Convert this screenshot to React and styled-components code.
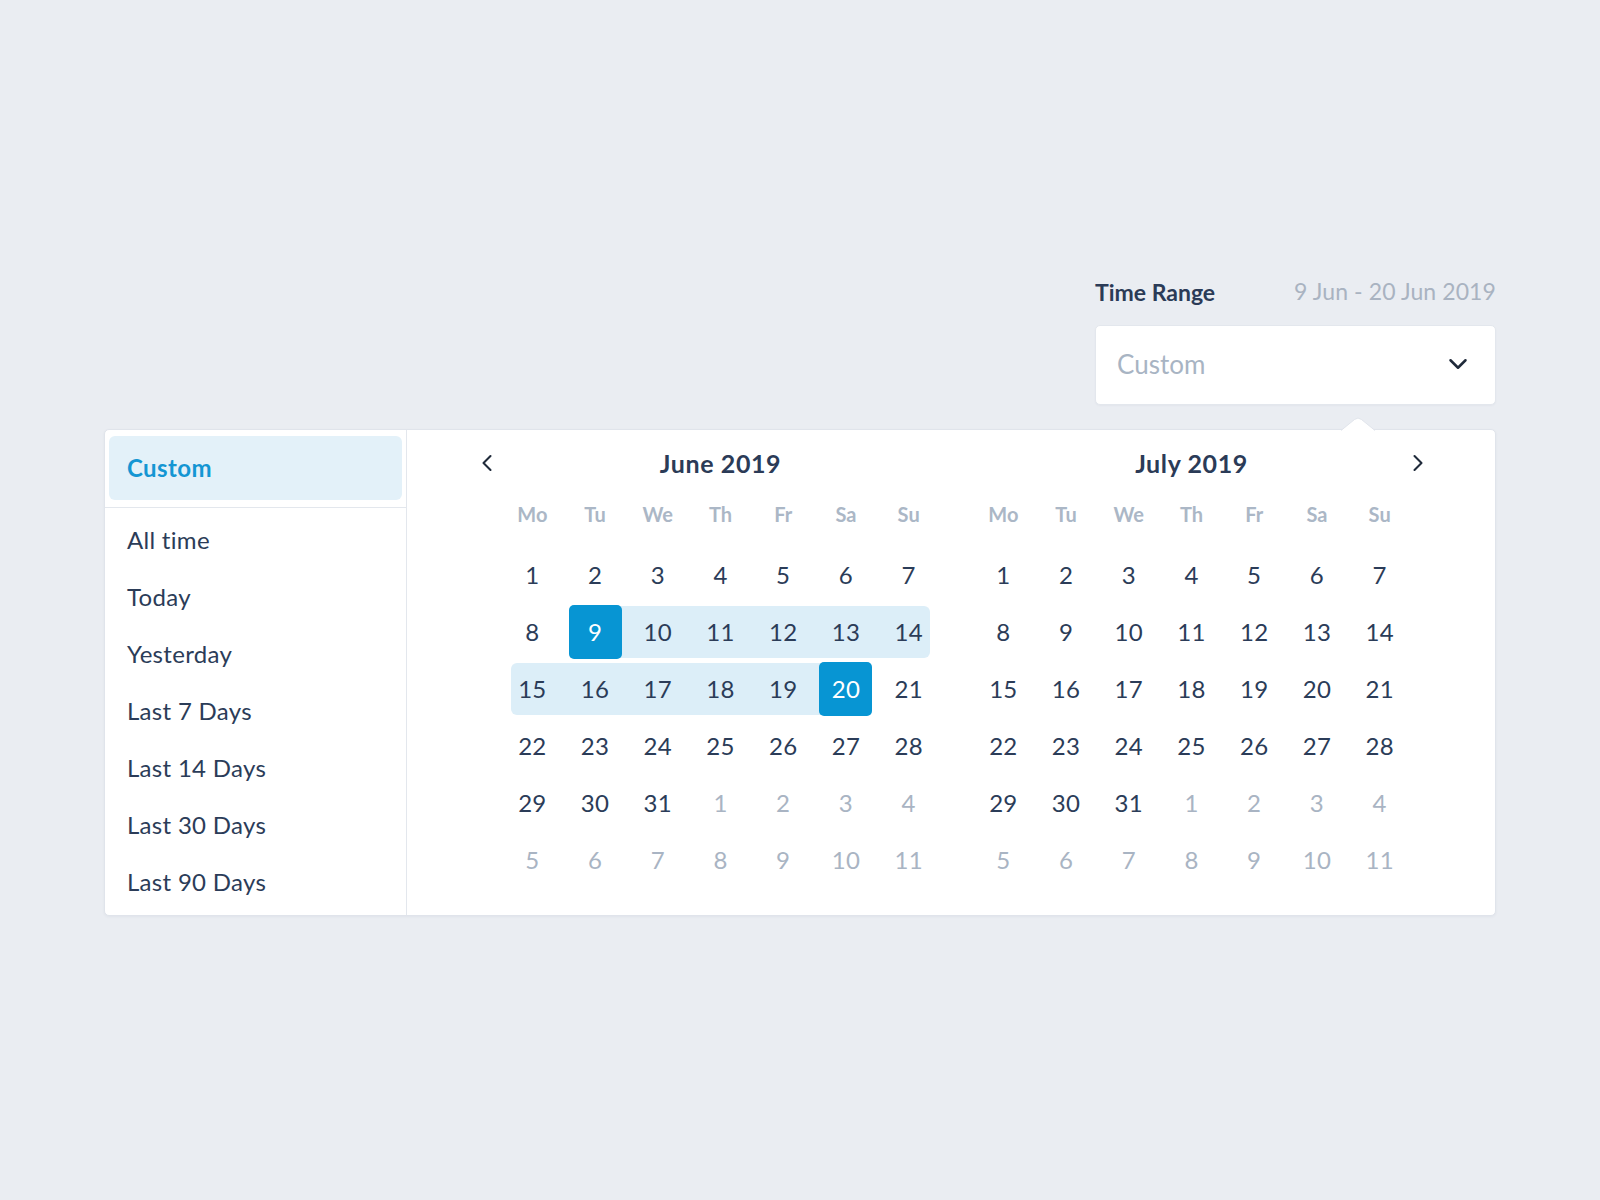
import styled, { createGlobalStyle } from 'styled-components'
import { ChevronLeft, ChevronRight, ChevronDown } from 'lucide-react'

const GlobalStyle = createGlobalStyle`
  body {
    margin: 0;
    background: #eaedf2;
    font-family: Lato, "Open Sans", sans-serif;
    color: #2b3c58;
  }
`

const presets = ['All time', 'Today', 'Yesterday', 'Last 7 Days', 'Last 14 Days', 'Last 30 Days', 'Last 90 Days']
const weekdays = ['Mo', 'Tu', 'We', 'Th', 'Fr', 'Sa', 'Su']

// mock grid: 1..31 then next month 1..11, starting on a Monday
const days = [
  ...Array.from({ length: 31 }, (_, i) => ({ n: i + 1, muted: false })),
  ...Array.from({ length: 11 }, (_, i) => ({ n: i + 1, muted: true })),
]

export default function App() {
  return (
    <>
      <GlobalStyle />
      <Page>
        <Header>
          <LabelRow>
            <Label>Time Range</Label>
            <RangeText>9 Jun - 20 Jun 2019</RangeText>
          </LabelRow>
          <Select>
            <span>Custom</span>
            <ChevronDown size={30} strokeWidth={2} color="#1f2a3a" />
          </Select>
        </Header>

        <Panel>
          <Caret width="34" height="14" viewBox="0 0 34 14">
            <path d="M0 13.5 L13.5 2.5 Q17 -0.5 20.5 2.5 L34 13.5" fill="#fff" stroke="#e0e4eb" strokeWidth="1" />
          </Caret>
          <Sidebar>
            <ActiveItem>Custom</ActiveItem>
            <Divider />
            <PresetList>
              {presets.map(p => <PresetItem key={p}>{p}</PresetItem>)}
            </PresetList>
          </Sidebar>
          <CalendarArea>
            <NavButton $side="left"><ChevronLeft size={28} strokeWidth={1.8} /></NavButton>
            <Month title="June 2019" range={[9, 20]} />
            <Month title="July 2019" />
            <NavButton $side="right"><ChevronRight size={28} strokeWidth={1.8} /></NavButton>
          </CalendarArea>
        </Panel>
      </Page>
    </>
  )
}

function Month({ title, range }) {
  return (
    <MonthPane>
      <MonthTitle>{title}</MonthTitle>
      <WeekRow>
        {weekdays.map(w => <Weekday key={w}>{w}</Weekday>)}
      </WeekRow>
      <DayGrid>
        {days.map((d, i) => {
          const col = i % 7
          let band = 'none'
          let selected = false
          if (range && !d.muted && d.n >= range[0] && d.n <= range[1]) {
            selected = d.n === range[0] || d.n === range[1]
            band = d.n === range[0] ? 'start' : d.n === range[1] ? 'end' : 'mid'
          }
          return (
            <Day
              key={i}
              $band={band}
              $rowStart={col === 0}
              $rowEnd={col === 6}
              $muted={d.muted}
            >
              {selected ? <Picked>{d.n}</Picked> : <span>{d.n}</span>}
            </Day>
          )
        })}
      </DayGrid>
    </MonthPane>
  )
}

const Page = styled.div`
  width: 1392px;
  margin-left: 104px;
  padding-top: 276px;
  padding-bottom: 200px;
`

const Header = styled.div`
  width: 401px;
  margin-left: auto;
`

const LabelRow = styled.div`
  display: flex;
  justify-content: space-between;
  align-items: center;
  height: 30px;
`

const Label = styled.div`
  font-size: 23px;
  font-weight: 700;
  color: #2b3b57;
  padding-top: 2px;
`

const RangeText = styled.div`
  font-size: 23px;
  color: #a9b3c1;
  letter-spacing: 0.1px;
`

const Select = styled.div`
  margin-top: 19px;
  height: 80px;
  box-sizing: border-box;
  background: #fff;
  border-radius: 5px;
  border: 1px solid #e3e7ed;
  box-shadow: 0 1px 2px rgba(40, 60, 90, 0.04);
  display: flex;
  align-items: center;
  justify-content: space-between;
  padding: 0 22px 2px 21px;
  font-size: 26px;
  color: #a8b4c3;
`

const Panel = styled.div`
  position: relative;
  margin-top: 24px;
  display: flex;
  background: #fff;
  border: 1px solid #e0e4eb;
  border-radius: 5px;
  box-shadow: 0 1px 3px rgba(40, 60, 90, 0.05);
`

const Caret = styled.svg`
  position: absolute;
  top: -13px;
  left: 1236px;
  display: block;
`

const Sidebar = styled.div`
  width: 301px;
  border-right: 1px solid #e3e7ed;
  padding-top: 6px;
  display: flex;
  flex-direction: column;
`

const ActiveItem = styled.div`
  margin: 0 4px 0 4px;
  height: 64px;
  box-sizing: border-box;
  padding: 0 0 2px 18px;
  border-radius: 6px;
  background: #e3f1f9;
  color: #1496d3;
  font-size: 24px;
  font-weight: 700;
  letter-spacing: 0.4px;
  display: flex;
  align-items: center;
`

const Divider = styled.div`
  height: 1px;
  background: #e3e7ed;
  margin-top: 7px;
`

const PresetList = styled.div`
  padding: 3px 0 5px;
  display: flex;
  flex-direction: column;
`

const PresetItem = styled.div`
  height: 57px;
  display: flex;
  align-items: center;
  padding-left: 22px;
  font-size: 24px;
  letter-spacing: 0.3px;
  color: #2b3c58;
`

const CalendarArea = styled.div`
  flex: 1;
  display: flex;
  align-items: flex-start;
  padding: 13px 0 29px 66px;
`

const NavButton = styled.div`
  width: 28px;
  height: 40px;
  display: flex;
  align-items: center;
  justify-content: center;
  color: #1f2a3a;
  margin-left: ${p => (p.$side === 'right' ? '-7px' : '0')};
`

const MonthPane = styled.div`
  width: 439px;
  & + & {
    margin-left: 32px;
  }
`

const MonthTitle = styled.div`
  height: 40px;
  display: flex;
  align-items: center;
  justify-content: center;
  font-size: 25px;
  font-weight: 700;
  letter-spacing: 0.6px;
  color: #2b3b57;
`

const WeekRow = styled.div`
  display: grid;
  grid-template-columns: repeat(7, 1fr);
  margin-top: 16px;
  height: 30px;
`

const Weekday = styled.div`
  display: flex;
  align-items: center;
  justify-content: center;
  font-size: 20px;
  font-weight: 700;
  color: #abb7c6;
`

const DayGrid = styled.div`
  display: grid;
  grid-template-columns: repeat(7, 1fr);
  grid-auto-rows: 52px;
  row-gap: 5px;
  margin-top: 20px;
`

const bandLeft = p => (p.$band === 'start' ? '50%' : p.$rowStart ? '10px' : '0')
const bandRight = p => (p.$band === 'end' ? '50%' : p.$rowEnd ? '10px' : '0')

const Day = styled.div`
  position: relative;
  isolation: isolate;
  display: flex;
  align-items: center;
  justify-content: center;
  font-size: 24px;
  letter-spacing: 0.3px;
  color: ${p => (p.$muted ? '#a9b4c3' : '#2b3c58')};

  & > span {
    padding-bottom: 1px;
  }

  &::before {
    content: '';
    display: ${p => (p.$band === 'none' ? 'none' : 'block')};
    position: absolute;
    z-index: -1;
    top: 0;
    bottom: 0;
    left: ${bandLeft};
    right: ${bandRight};
    background: #dceef8;
    border-radius: ${p => `${p.$rowStart ? 6 : 0}px ${p.$rowEnd ? 6 : 0}px ${p.$rowEnd ? 6 : 0}px ${p.$rowStart ? 6 : 0}px`};
  }
`

const Picked = styled.span`
  width: 53px;
  height: 53px;
  border-radius: 5px;
  background: #0795d3;
  color: #fff;
  display: flex;
  align-items: center;
  justify-content: center;
`
